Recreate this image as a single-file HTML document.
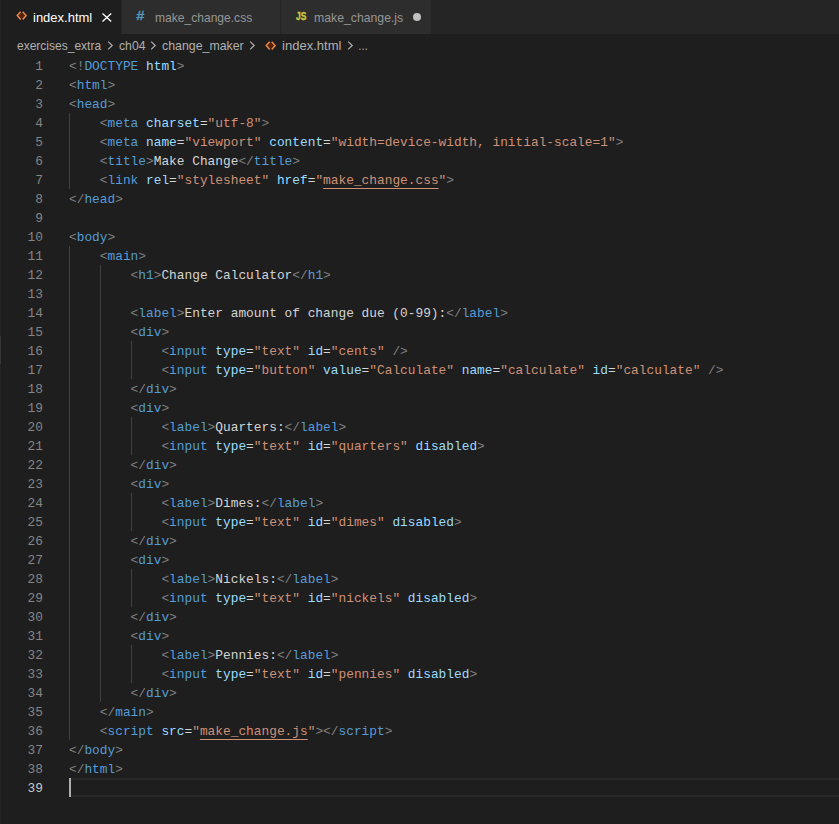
<!DOCTYPE html>
<html lang="en">
<head>
<meta charset="utf-8">
<title>index.html - Visual Studio Code</title>
<style>
*{margin:0;padding:0;box-sizing:border-box}
html,body{width:839px;height:824px;overflow:hidden;background:#1e1e1e}
body{position:relative;font-family:"Liberation Sans",sans-serif;font-size:13px;color:#ccc}
.tabs{position:absolute;left:0;top:0;width:839px;height:34px;background:#252526}
.tab{position:absolute;top:0;height:34px;background:#2d2d2d;color:#969696;white-space:nowrap}
.tab.active{background:#1e1e1e;color:#fff}
.lbl{position:absolute;top:0;line-height:35px;font-size:13px;transform-origin:0 50%;white-space:nowrap}
.gl{position:absolute;line-height:14px;height:14px;white-space:nowrap;transform-origin:0 50%}
.hash{color:#519aba;font-weight:bold;font-size:13.4px;font-style:italic;transform:scaleX(1.1);-webkit-text-stroke:0.3px #519aba}
.js{color:#cbcb41;font-weight:bold;font-size:11.4px;transform:scaleX(0.75);-webkit-text-stroke:0.35px #cbcb41}
.dot{width:8.6px;height:8.6px;border-radius:50%;background:#bfbfbf}
.ico{position:absolute}
.crumbs{position:absolute;left:0;top:35px;width:839px;height:22px;background:#1e1e1e;color:#b0b0b0;white-space:nowrap}
.crumbs .lbl{line-height:22px}
.editor{position:absolute;left:0;top:0;width:839px;height:824px;pointer-events:none}
.row{position:relative;height:19px;line-height:19px;white-space:pre;font-family:"Liberation Mono",monospace;font-size:12.83px}
.rows{position:absolute;left:0;top:56px;width:839px}
.ln{position:absolute;left:0;top:1px;width:43px;text-align:right;color:#858585}
.ln.cur{color:#c6c6c6}
.code{position:absolute;left:69px;top:1px;color:#d4d4d4}
.p{color:#808080}.t{color:#569cd6}.a{color:#9cdcfe}.s{color:#ce9178}.x{color:#d4d4d4}
u{text-decoration:underline;text-underline-offset:3.5px;text-decoration-thickness:1px}
.g{position:absolute;width:1px;background:#404040}
.curline{position:absolute;left:69px;top:778px;width:770px;height:19px;border-top:2px solid #282828;border-bottom:2px solid #282828}
.cursor{position:absolute;left:69px;top:778px;width:2px;height:19px;background:#aeafad}
.edge{position:absolute;left:0;top:0;width:1px;height:824px;background:#252525}
.edge2{position:absolute;left:0;top:336px;width:1px;height:28px;background:#363636}

</style>
</head>
<body>
<div class="tabs">
  <div class="tab active" style="left:0;width:121px">
    <svg class="ico" style="left:15.8px;top:11.3px" width="11.4" height="9.2" viewBox="0 0 12 10"><path d="M6 1.6 L9.4 5 L6 8.4 L2.6 5 Z" fill="#5c2206"/><path d="M4.9 0.8 L1.2 5 L4.9 9.2 M7.1 0.8 L10.8 5 L7.1 9.2" fill="none" stroke="#e8864a" stroke-width="1.7"/></svg>
    <span class="lbl" style="left:33.3px;transform:scaleX(0.9992)">index.html</span>
    <svg class="ico" style="left:102px;top:12.5px" width="10" height="9" viewBox="0 0 10 9"><path d="M0.5 0.5 L9.2 8.5 M9.2 0.5 L0.5 8.5" fill="none" stroke="#fff" stroke-width="1.3"/></svg>
  </div>
  <div class="tab" style="left:122px;width:158px">
    <span class="gl hash" style="left:14.3px;top:9px">#</span>
    <span class="lbl" style="left:32.6px;transform:scaleX(0.9277)">make_change.css</span>
  </div>
  <div class="tab" style="left:281px;width:150px">
    <span class="gl js" style="left:14.7px;top:8.8px">JS</span>
    <span class="lbl" style="left:32.6px;transform:scaleX(0.9422)">make_change.js</span>
    <i class="ico dot" style="left:131.6px;top:12.9px"></i>
  </div>
</div>
<div class="crumbs">
  <span class="lbl" style="left:17.2px;transform:scaleX(0.9237)">exercises_extra</span>
  <svg class="ico" style="left:106.5px;top:6.200000000000003px" width="7" height="9" viewBox="0 0 7 9"><path d="M1.2 0.6 L5.2 4.5 L1.2 8.4" fill="none" stroke="#b0b0b0" stroke-width="1.2"/></svg>
  <span class="lbl" style="left:118.5px;transform:scaleX(0.9397)">ch04</span>
  <svg class="ico" style="left:150.3px;top:6.200000000000003px" width="7" height="9" viewBox="0 0 7 9"><path d="M1.2 0.6 L5.2 4.5 L1.2 8.4" fill="none" stroke="#b0b0b0" stroke-width="1.2"/></svg>
  <span class="lbl" style="left:161.8px;transform:scaleX(0.9500)">change_maker</span>
  <svg class="ico" style="left:248.5px;top:6.200000000000003px" width="7" height="9" viewBox="0 0 7 9"><path d="M1.2 0.6 L5.2 4.5 L1.2 8.4" fill="none" stroke="#b0b0b0" stroke-width="1.2"/></svg>
  <svg class="ico" style="left:264.5px;top:5.6px" width="11.4" height="9.2" viewBox="0 0 12 10"><path d="M6 1.6 L9.4 5 L6 8.4 L2.6 5 Z" fill="#5c2206"/><path d="M4.9 0.8 L1.2 5 L4.9 9.2 M7.1 0.8 L10.8 5 L7.1 9.2" fill="none" stroke="#e8864a" stroke-width="1.7"/></svg>
  <span class="lbl" style="left:282px;transform:scaleX(1.0042)">index.html</span>
  <svg class="ico" style="left:346.5px;top:6.200000000000003px" width="7" height="9" viewBox="0 0 7 9"><path d="M1.2 0.6 L5.2 4.5 L1.2 8.4" fill="none" stroke="#b0b0b0" stroke-width="1.2"/></svg>
  <span class="lbl" style="left:357.6px;transform:scaleX(0.78)">…</span>
</div>

<div class="editor">
<div class="curline"></div>
<i class="g" style="left:69px;top:113px;height:76px"></i><i class="g" style="left:69px;top:246px;height:494px"></i><i class="g" style="left:100px;top:265px;height:437px"></i><i class="g" style="left:131px;top:341px;height:38px"></i><i class="g" style="left:131px;top:417px;height:38px"></i><i class="g" style="left:131px;top:493px;height:38px"></i><i class="g" style="left:131px;top:569px;height:38px"></i><i class="g" style="left:131px;top:645px;height:38px"></i>
<div class="rows">
<div class="row"><span class="ln">1</span><span class="code"><span class="p">&lt;!</span><span class="t">DOCTYPE</span> <span class="a">html</span><span class="p">&gt;</span></span></div>
<div class="row"><span class="ln">2</span><span class="code"><span class="p">&lt;</span><span class="t">html</span><span class="p">&gt;</span></span></div>
<div class="row"><span class="ln">3</span><span class="code"><span class="p">&lt;</span><span class="t">head</span><span class="p">&gt;</span></span></div>
<div class="row"><span class="ln">4</span><span class="code">    <span class="p">&lt;</span><span class="t">meta</span> <span class="a">charset</span><span class="x">=</span><span class="s">"utf-8"</span><span class="p">&gt;</span></span></div>
<div class="row"><span class="ln">5</span><span class="code">    <span class="p">&lt;</span><span class="t">meta</span> <span class="a">name</span><span class="x">=</span><span class="s">"viewport"</span> <span class="a">content</span><span class="x">=</span><span class="s">"width=device-width, initial-scale=1"</span><span class="p">&gt;</span></span></div>
<div class="row"><span class="ln">6</span><span class="code">    <span class="p">&lt;</span><span class="t">title</span><span class="p">&gt;</span><span class="x">Make Change</span><span class="p">&lt;/</span><span class="t">title</span><span class="p">&gt;</span></span></div>
<div class="row"><span class="ln">7</span><span class="code">    <span class="p">&lt;</span><span class="t">link</span> <span class="a">rel</span><span class="x">=</span><span class="s">"stylesheet"</span> <span class="a">href</span><span class="x">=</span><span class="s">"<u>make_change.css</u>"</span><span class="p">&gt;</span></span></div>
<div class="row"><span class="ln">8</span><span class="code"><span class="p">&lt;/</span><span class="t">head</span><span class="p">&gt;</span></span></div>
<div class="row"><span class="ln">9</span><span class="code"></span></div>
<div class="row"><span class="ln">10</span><span class="code"><span class="p">&lt;</span><span class="t">body</span><span class="p">&gt;</span></span></div>
<div class="row"><span class="ln">11</span><span class="code">    <span class="p">&lt;</span><span class="t">main</span><span class="p">&gt;</span></span></div>
<div class="row"><span class="ln">12</span><span class="code">        <span class="p">&lt;</span><span class="t">h1</span><span class="p">&gt;</span><span class="x">Change Calculator</span><span class="p">&lt;/</span><span class="t">h1</span><span class="p">&gt;</span></span></div>
<div class="row"><span class="ln">13</span><span class="code"></span></div>
<div class="row"><span class="ln">14</span><span class="code">        <span class="p">&lt;</span><span class="t">label</span><span class="p">&gt;</span><span class="x">Enter amount of change due (0-99):</span><span class="p">&lt;/</span><span class="t">label</span><span class="p">&gt;</span></span></div>
<div class="row"><span class="ln">15</span><span class="code">        <span class="p">&lt;</span><span class="t">div</span><span class="p">&gt;</span></span></div>
<div class="row"><span class="ln">16</span><span class="code">            <span class="p">&lt;</span><span class="t">input</span> <span class="a">type</span><span class="x">=</span><span class="s">"text"</span> <span class="a">id</span><span class="x">=</span><span class="s">"cents"</span> <span class="p">/&gt;</span></span></div>
<div class="row"><span class="ln">17</span><span class="code">            <span class="p">&lt;</span><span class="t">input</span> <span class="a">type</span><span class="x">=</span><span class="s">"button"</span> <span class="a">value</span><span class="x">=</span><span class="s">"Calculate"</span> <span class="a">name</span><span class="x">=</span><span class="s">"calculate"</span> <span class="a">id</span><span class="x">=</span><span class="s">"calculate"</span> <span class="p">/&gt;</span></span></div>
<div class="row"><span class="ln">18</span><span class="code">        <span class="p">&lt;/</span><span class="t">div</span><span class="p">&gt;</span></span></div>
<div class="row"><span class="ln">19</span><span class="code">        <span class="p">&lt;</span><span class="t">div</span><span class="p">&gt;</span></span></div>
<div class="row"><span class="ln">20</span><span class="code">            <span class="p">&lt;</span><span class="t">label</span><span class="p">&gt;</span><span class="x">Quarters:</span><span class="p">&lt;/</span><span class="t">label</span><span class="p">&gt;</span></span></div>
<div class="row"><span class="ln">21</span><span class="code">            <span class="p">&lt;</span><span class="t">input</span> <span class="a">type</span><span class="x">=</span><span class="s">"text"</span> <span class="a">id</span><span class="x">=</span><span class="s">"quarters"</span> <span class="a">disabled</span><span class="p">&gt;</span></span></div>
<div class="row"><span class="ln">22</span><span class="code">        <span class="p">&lt;/</span><span class="t">div</span><span class="p">&gt;</span></span></div>
<div class="row"><span class="ln">23</span><span class="code">        <span class="p">&lt;</span><span class="t">div</span><span class="p">&gt;</span></span></div>
<div class="row"><span class="ln">24</span><span class="code">            <span class="p">&lt;</span><span class="t">label</span><span class="p">&gt;</span><span class="x">Dimes:</span><span class="p">&lt;/</span><span class="t">label</span><span class="p">&gt;</span></span></div>
<div class="row"><span class="ln">25</span><span class="code">            <span class="p">&lt;</span><span class="t">input</span> <span class="a">type</span><span class="x">=</span><span class="s">"text"</span> <span class="a">id</span><span class="x">=</span><span class="s">"dimes"</span> <span class="a">disabled</span><span class="p">&gt;</span></span></div>
<div class="row"><span class="ln">26</span><span class="code">        <span class="p">&lt;/</span><span class="t">div</span><span class="p">&gt;</span></span></div>
<div class="row"><span class="ln">27</span><span class="code">        <span class="p">&lt;</span><span class="t">div</span><span class="p">&gt;</span></span></div>
<div class="row"><span class="ln">28</span><span class="code">            <span class="p">&lt;</span><span class="t">label</span><span class="p">&gt;</span><span class="x">Nickels:</span><span class="p">&lt;/</span><span class="t">label</span><span class="p">&gt;</span></span></div>
<div class="row"><span class="ln">29</span><span class="code">            <span class="p">&lt;</span><span class="t">input</span> <span class="a">type</span><span class="x">=</span><span class="s">"text"</span> <span class="a">id</span><span class="x">=</span><span class="s">"nickels"</span> <span class="a">disabled</span><span class="p">&gt;</span></span></div>
<div class="row"><span class="ln">30</span><span class="code">        <span class="p">&lt;/</span><span class="t">div</span><span class="p">&gt;</span></span></div>
<div class="row"><span class="ln">31</span><span class="code">        <span class="p">&lt;</span><span class="t">div</span><span class="p">&gt;</span></span></div>
<div class="row"><span class="ln">32</span><span class="code">            <span class="p">&lt;</span><span class="t">label</span><span class="p">&gt;</span><span class="x">Pennies:</span><span class="p">&lt;/</span><span class="t">label</span><span class="p">&gt;</span></span></div>
<div class="row"><span class="ln">33</span><span class="code">            <span class="p">&lt;</span><span class="t">input</span> <span class="a">type</span><span class="x">=</span><span class="s">"text"</span> <span class="a">id</span><span class="x">=</span><span class="s">"pennies"</span> <span class="a">disabled</span><span class="p">&gt;</span></span></div>
<div class="row"><span class="ln">34</span><span class="code">        <span class="p">&lt;/</span><span class="t">div</span><span class="p">&gt;</span></span></div>
<div class="row"><span class="ln">35</span><span class="code">    <span class="p">&lt;/</span><span class="t">main</span><span class="p">&gt;</span></span></div>
<div class="row"><span class="ln">36</span><span class="code">    <span class="p">&lt;</span><span class="t">script</span> <span class="a">src</span><span class="x">=</span><span class="s">"<u>make_change.js</u>"</span><span class="p">&gt;</span><span class="p">&lt;/</span><span class="t">script</span><span class="p">&gt;</span></span></div>
<div class="row"><span class="ln">37</span><span class="code"><span class="p">&lt;/</span><span class="t">body</span><span class="p">&gt;</span></span></div>
<div class="row"><span class="ln">38</span><span class="code"><span class="p">&lt;/</span><span class="t">html</span><span class="p">&gt;</span></span></div>
<div class="row"><span class="ln cur">39</span><span class="code"></span></div>
</div>
<div class="cursor"></div>
</div>
<div class="edge"></div><div class="edge2"></div>
</body>
</html>
